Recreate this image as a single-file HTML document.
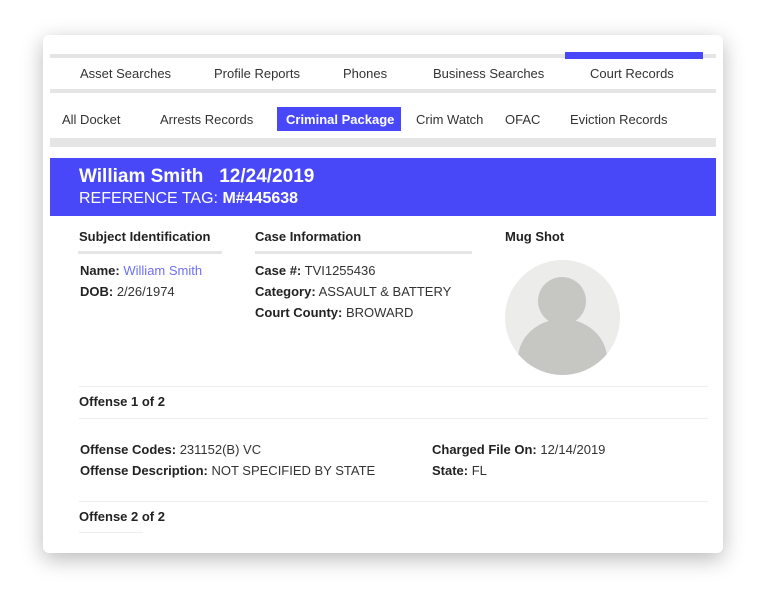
<!DOCTYPE html>
<html><head><style>
*{margin:0;padding:0;box-sizing:border-box}
body{width:768px;height:589px;background:#fff;position:relative;overflow:hidden;font-family:"Liberation Sans",sans-serif;color:#333}
.card{position:absolute;left:43px;top:35px;width:680px;height:518px;background:#fff;border-radius:6px;box-shadow:0 6px 22px rgba(0,0,0,.28)}
.a{position:absolute;white-space:nowrap}
.t{font-size:13px;color:#333}
.bar{position:absolute;background:#e5e5e5}
b{color:#222}
</style></head><body>
<div class="card"></div>
<div class="bar" style="left:50px;top:54px;width:666px;height:4px"></div>
<div class="a" style="left:565px;top:52px;width:138px;height:7px;background:#4848f8"></div>
<div class="a t" style="left:80px;top:66px">Asset Searches</div>
<div class="a t" style="left:214px;top:66px">Profile Reports</div>
<div class="a t" style="left:343px;top:66px">Phones</div>
<div class="a t" style="left:433px;top:66px">Business Searches</div>
<div class="a t" style="left:590px;top:66px">Court Records</div>
<div class="bar" style="left:50px;top:89px;width:666px;height:4px"></div>
<div class="a t" style="left:62px;top:112px">All Docket</div>
<div class="a t" style="left:160px;top:112px">Arrests Records</div>
<div class="a" style="left:277px;top:107px;width:124px;height:24px;background:#4848f8;color:#fff;font-size:13px;font-weight:bold;padding:5px 0 0 9px">Criminal Package</div>
<div class="a t" style="left:416px;top:112px">Crim Watch</div>
<div class="a t" style="left:505px;top:112px">OFAC</div>
<div class="a t" style="left:570px;top:112px">Eviction Records</div>
<div class="bar" style="left:50px;top:138px;width:666px;height:9px"></div>
<div class="a" style="left:50px;top:158px;width:666px;height:58px;background:#4848f8"></div>
<div class="a" style="left:79px;top:166px;color:#fff;font-size:19px;font-weight:bold">William Smith&nbsp;&nbsp; 12/24/2019</div>
<div class="a" style="left:79px;top:190px;color:#fff;font-size:16px">REFERENCE TAG: <b style="color:#fff">M#445638</b></div>
<div class="a t" style="left:79px;top:229px;font-weight:bold;color:#222">Subject Identification</div>
<div class="a t" style="left:255px;top:229px;font-weight:bold;color:#222">Case Information</div>
<div class="a t" style="left:505px;top:229px;font-weight:bold;color:#222">Mug Shot</div>
<div class="bar" style="left:78px;top:251px;width:144px;height:3px"></div>
<div class="bar" style="left:255px;top:251px;width:217px;height:3px"></div>
<div class="a t" style="left:80px;top:263px"><b>Name:</b> <span style="color:#6f6ff8">William Smith</span></div>
<div class="a t" style="left:80px;top:284px"><b>DOB:</b> 2/26/1974</div>
<div class="a t" style="left:255px;top:263px"><b>Case #:</b> TVI1255436</div>
<div class="a t" style="left:255px;top:284px"><b>Category:</b> ASSAULT &amp; BATTERY</div>
<div class="a t" style="left:255px;top:305px"><b>Court County:</b> BROWARD</div>
<div class="a" style="left:505px;top:260px;width:115px;height:115px;border-radius:50%;background:#ececea;overflow:hidden">
<div class="a" style="left:33px;top:17px;width:48px;height:48px;border-radius:50%;background:#c6c6c2"></div>
<div class="a" style="left:13px;top:59px;width:89px;height:80px;border-radius:50%;background:#c6c6c2"></div>
</div>
<div class="bar" style="left:79px;top:386px;width:629px;height:1px;background:#eee"></div>
<div class="a t" style="left:79px;top:394px;font-weight:bold;color:#222">Offense 1 of 2</div>
<div class="bar" style="left:79px;top:418px;width:629px;height:1px;background:#eee"></div>
<div class="a t" style="left:80px;top:442px"><b>Offense Codes:</b> 231152(B) VC</div>
<div class="a t" style="left:80px;top:463px"><b>Offense Description:</b> NOT SPECIFIED BY STATE</div>
<div class="a t" style="left:432px;top:442px"><b>Charged File On:</b> 12/14/2019</div>
<div class="a t" style="left:432px;top:463px"><b>State:</b> FL</div>
<div class="bar" style="left:79px;top:501px;width:629px;height:1px;background:#eee"></div>
<div class="a t" style="left:79px;top:509px;font-weight:bold;color:#222;height:12px;overflow:hidden">Offense 2 of 2</div>
<div class="bar" style="left:79px;top:532px;width:64px;height:1px;background:#eee"></div>
</body></html>
